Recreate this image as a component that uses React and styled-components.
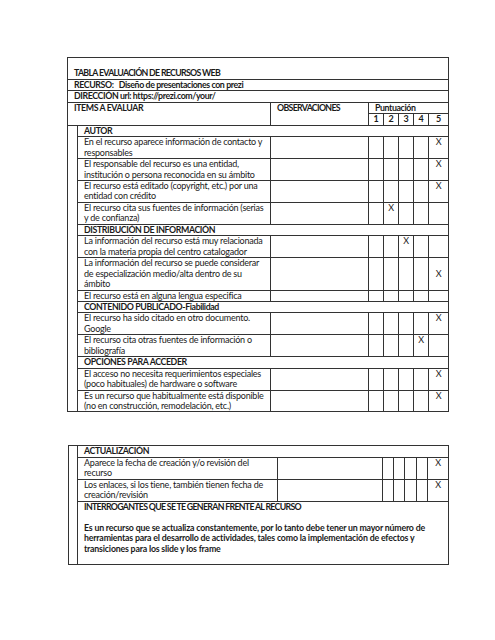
import React from "react"
import styled, { createGlobalStyle } from "styled-components"

const Global = createGlobalStyle`
  body {
    margin: 0;
    background: #fff;
  }
`

const Page = styled.div`
  width: 495px;
  min-height: 640px;
  padding: 57px 0 0 67px;
  box-sizing: border-box;
  font-family: Lato, "Liberation Sans", sans-serif;
  font-size: 9px;
  line-height: 10.45px;
  color: #1a1a1a;
  letter-spacing: -0.23px;
`

const Table = styled.table`
  border-collapse: collapse;
  table-layout: fixed;
  width: 381px;
  margin-top: ${(p) => p.$gap || 0}px;
  margin-left: ${(p) => p.$shift || 0}px;
`

const Cell = styled.td`
  border: 1px solid #333;
  padding: 0 4px 0 6px;
  vertical-align: top;
  font-weight: ${(p) => (p.$bold ? 700 : 400)};
  font-size: ${(p) => (p.$bold ? "8.8px" : "9px")};
  letter-spacing: ${(p) => (p.$bold ? "-0.4px" : "-0.23px")};
  overflow: hidden;
`

const Score = styled.td`
  border: 1px solid #333;
  padding: 0;
  vertical-align: top;
  text-align: center;
  font-weight: ${(p) => (p.$bold ? 700 : 400)};
`

const Side = styled.td`
  border: 1px solid #333;
  padding: 0;
`

const Line = styled.span`
  display: block;
  white-space: nowrap;
  min-height: 10.45px;
  letter-spacing: ${(p) => (p.$tight ? "-0.7px" : "inherit")};
`

const ProseLine = styled(Line)`
  letter-spacing: -0.2px;
`

const first = [
  {
    title: "AUTOR",
    rows: [
      { text: ["En el recurso aparece información de contacto y", "responsables"], score: 5 },
      { text: ["El responsable del recurso es una entidad,", "institución o persona reconocida en su ámbito"], score: 5 },
      { text: ["El recurso está editado (copyright, etc.) por una", "entidad con crédito"], score: 5 },
      { text: ["El recurso cita sus fuentes de información (serias", "y de confianza)"], score: 2 },
    ],
  },
  {
    title: "DISTRIBUCIÓN DE INFORMACIÓN",
    rows: [
      { text: ["La información del recurso está muy relacionada", "con la materia propia del centro catalogador"], score: 3 },
      {
        text: ["La información del recurso se puede considerar", "de especialización medio/alta dentro de su", "ámbito"],
        score: 5,
        at: 1,
      },
      { text: ["El recurso está en alguna lengua especifica"], score: 0 },
    ],
  },
  {
    title: "CONTENIDO PUBLICADO-Fiabilidad",
    rows: [
      { text: ["El recurso ha sido citado en otro documento.", "Google"], score: 5 },
      { text: ["El recurso cita otras fuentes de información o", "bibliografía"], score: 4 },
    ],
  },
  {
    title: "OPCIONES PARA ACCEDER",
    rows: [
      { text: ["El acceso no necesita requerimientos especiales", "(poco habituales) de hardware o software"], score: 5 },
      { text: ["Es un recurso que habitualmente está disponible", "(no en construcción, remodelación, etc.)"], score: 5 },
    ],
  },
]

const second = [
  { text: ["Aparece la fecha de creación y/o revisión del", "recurso"], score: 5 },
  { text: ["Los enlaces, si los tiene, también tienen fecha de", "creación/revisión"], score: 5 },
]

const Lines = ({ lines }) => lines.map((l, i) => <Line key={i}>{l}</Line>)

const ScoreCells = ({ row }) =>
  [1, 2, 3, 4, 5].map((n) => (
    <Score key={n}>
      {row.score === n && (
        <>
          {row.at ? <Line /> : null}
          <Line>X</Line>
        </>
      )}
    </Score>
  ))

const ItemRow = ({ row }) => (
  <tr>
    <Cell>
      <Lines lines={row.text} />
    </Cell>
    <Cell />
    <ScoreCells row={row} />
  </tr>
)

export default function App() {
  const firstCount = first.reduce((n, s) => n + 1 + s.rows.length, 0)
  return (
    <Page>
      <Global />
      <Table>
        <colgroup>
          <col style={{ width: 10 }} />
          <col style={{ width: 193 }} />
          <col style={{ width: 98 }} />
          <col style={{ width: 15 }} />
          <col style={{ width: 15 }} />
          <col style={{ width: 15 }} />
          <col style={{ width: 15 }} />
          <col style={{ width: 20 }} />
        </colgroup>
        <tbody>
          <tr>
            <Cell colSpan={8} $bold>
              <Line />
              <Line $tight>TABLA EVALUACIÓN DE RECURSOS WEB</Line>
            </Cell>
          </tr>
          <tr>
            <Cell colSpan={8} $bold>
              <Line>RECURSO:&nbsp;&nbsp; Diseño de presentaciones con prezi</Line>
            </Cell>
          </tr>
          <tr>
            <Cell colSpan={8} $bold>
              <Line>DIRECCIÓN url: https://prezi.com/your/</Line>
            </Cell>
          </tr>
          <tr>
            <Cell colSpan={2} rowSpan={2} $bold>
              <Line>ITEMS A EVALUAR</Line>
            </Cell>
            <Cell rowSpan={2} $bold>
              <Line $tight>OBSERVACIONES</Line>
            </Cell>
            <Cell colSpan={5} $bold>
              <Line>Puntuación</Line>
            </Cell>
          </tr>
          <tr>
            {[1, 2, 3, 4, 5].map((n) => (
              <Score key={n} $bold>
                {n}
              </Score>
            ))}
          </tr>
          {first.map((section, si) => (
            <React.Fragment key={section.title}>
              <tr>
                {si === 0 && <Side rowSpan={firstCount} />}
                <Cell colSpan={7} $bold>
                  <Line>{section.title}</Line>
                </Cell>
              </tr>
              {section.rows.map((row, ri) => (
                <ItemRow key={ri} row={row} />
              ))}
            </React.Fragment>
          ))}
        </tbody>
      </Table>

      <Table $gap={33} $shift={1}>
        <colgroup>
          <col style={{ width: 9 }} />
          <col style={{ width: 200 }} />
          <col style={{ width: 105 }} />
          <col style={{ width: 11 }} />
          <col style={{ width: 11 }} />
          <col style={{ width: 12 }} />
          <col style={{ width: 11 }} />
          <col style={{ width: 21 }} />
        </colgroup>
        <tbody>
          <tr>
            <Side rowSpan={4} />
            <Cell colSpan={7} $bold>
              <Line>ACTUALIZACIÓN</Line>
            </Cell>
          </tr>
          {second.map((row, ri) => (
            <ItemRow key={ri} row={row} />
          ))}
          <tr>
            <Cell colSpan={7} $bold>
              <Line $tight>INTERROGANTES QUE SE TE GENERAN FRENTE AL RECURSO</Line>
              <Line />
              <ProseLine>
                Es un recurso que se actualiza constantemente, por lo tanto debe tener un mayor número de
              </ProseLine>
              <ProseLine>
                herramientas para el desarrollo de actividades, tales como la implementación de efectos y
              </ProseLine>
              <ProseLine>transiciones para los slide y los frame</ProseLine>
              <Line />
            </Cell>
          </tr>
        </tbody>
      </Table>
    </Page>
  )
}
